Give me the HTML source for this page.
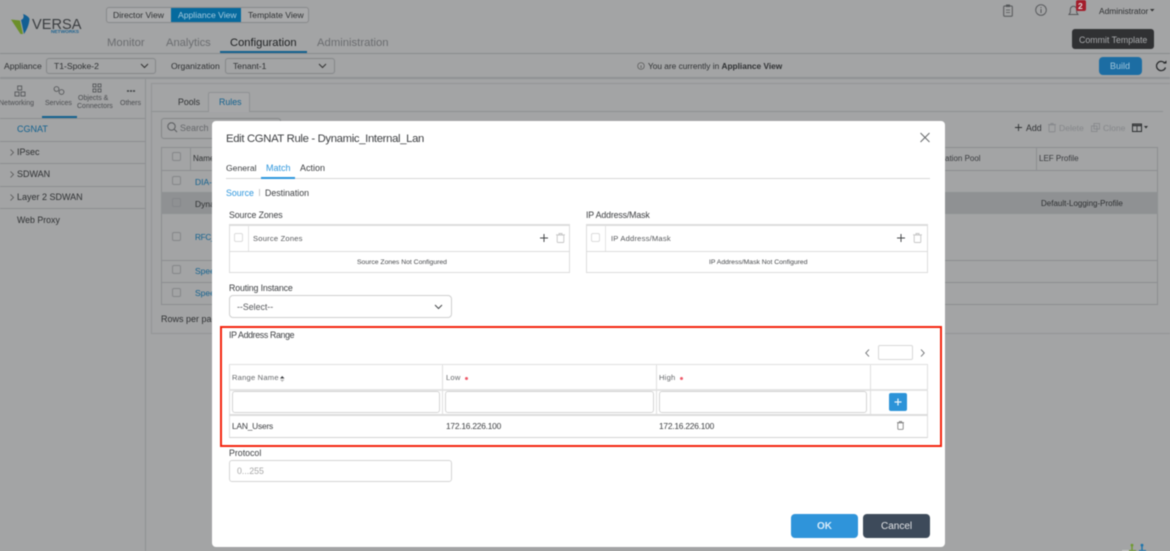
<!DOCTYPE html>
<html><head><meta charset="utf-8"><style>
html,body{margin:0;padding:0;width:1170px;height:551px;overflow:hidden;background:#a3a4a5}
#r{position:relative;width:1170px;height:551px;overflow:hidden;font-family:"Liberation Sans",sans-serif;filter:blur(.5px)}
#r div,#r span.t{position:absolute;box-sizing:border-box}
.t{white-space:nowrap;line-height:14px;height:14px;color:#2f3133}
svg{position:absolute;overflow:visible}
.bx{border:1px solid #85878a;border-radius:3px}
</style></head><body><div id="r">
<!-- background -->
<svg style="left:11px;top:14px" width="20" height="21" viewBox="0 0 20 21"><path d="M0 5.5 L9 6.5 L12 20 L9.5 20Z" fill="#6c8f2a"/><path d="M10 6 C13 5 13 2 12 0 C15 1 18 3 18.5 5 C18 12 15 17 13 20 Z" fill="#125f94"/></svg>
<span class="t" style="left:32px;top:16px;font-size:14.6px;line-height:18px;height:18px;color:#3a3d40">VERSA</span>
<span class="t" style="left:51px;top:29px;font-size:4.8px;color:#1d6391;font-weight:bold;line-height:8px;height:8px">NETWORKS</span>

<div style="left:106px;top:7px;width:203px;height:16px;background:#a8a9aa;border:1px solid #88898b;border-radius:3px"></div>
<div style="left:171px;top:8px;width:70px;height:14px;background:#066a9e"></div>
<span class="t" style="left:113px;top:8px;font-size:8.6px;color:#303234">Director View</span>
<span class="t" style="left:178px;top:8px;font-size:8.6px;color:#a4cbe0">Appliance View</span>
<span class="t" style="left:248px;top:8px;font-size:8.6px;color:#303234">Template View</span>

<span class="t" style="left:107px;top:36px;font-size:11.3px;color:#6b6d70">Monitor</span>
<span class="t" style="left:166px;top:36px;font-size:11.2px;color:#6b6d70">Analytics</span>
<span class="t" style="left:230px;top:36px;font-size:11.2px;color:#1e2022">Configuration</span>
<span class="t" style="left:317px;top:36px;font-size:11.3px;color:#6b6d70">Administration</span>
<div style="left:220px;top:51px;width:87px;height:2px;background:#14628f"></div>
<div style="left:0;top:53px;width:1170px;height:1px;background:#8a8c8e"></div>

<span class="t" style="left:4px;top:59px;font-size:8.6px">Appliance</span>
<div class="bx" style="left:46px;top:58px;width:110px;height:16px"></div>
<span class="t" style="left:54px;top:59px;font-size:8.6px">T1-Spoke-2</span>
<svg style="left:140px;top:63px" width="9" height="6"><path d="M1 1 L4.5 4.5 L8 1" fill="none" stroke="#333" stroke-width="1"/></svg>
<span class="t" style="left:171px;top:59px;font-size:8.6px">Organization</span>
<div class="bx" style="left:225px;top:58px;width:110px;height:16px"></div>
<span class="t" style="left:233px;top:59px;font-size:8.6px">Tenant-1</span>
<svg style="left:318px;top:63px" width="9" height="6"><path d="M1 1 L4.5 4.5 L8 1" fill="none" stroke="#333" stroke-width="1"/></svg>
<svg style="left:637px;top:62px" width="8" height="8"><circle cx="4" cy="4" r="3.3" fill="none" stroke="#555" stroke-width=".7"/><path d="M4 3.4V6" stroke="#555" stroke-width=".8"/></svg>
<span class="t" style="left:648px;top:59px;font-size:8.3px">You are currently in <b style="font-weight:bold">Appliance View</b></span>
<div style="left:1099px;top:57px;width:43px;height:18px;background:#1c6da3;border-radius:4px"></div>
<span class="t" style="left:1110px;top:59px;font-size:9px;color:#9fc4da">Build</span>
<svg style="left:1155px;top:60px" width="12" height="12"><path d="M10 3.5 A4.6 4.6 0 1 0 10.5 7.5" fill="none" stroke="#26282a" stroke-width="1.2"/><path d="M8 3.5H11.5V0.5Z" fill="#26282a"/></svg>
<div style="left:0;top:77px;width:1170px;height:2px;background:#909294"></div>

<svg style="left:1003px;top:4px" width="10" height="13"><rect x=".7" y="2" width="8.6" height="10.2" rx="1" fill="none" stroke="#55575a"/><rect x="3" y=".5" width="4" height="2.5" fill="#55575a"/><path d="M3 6H7M3 8.5H7" stroke="#55575a" stroke-width=".7"/></svg>
<svg style="left:1035px;top:4px" width="12" height="12"><circle cx="6" cy="6" r="5.3" fill="none" stroke="#55575a" stroke-width=".9"/><path d="M6 5V9M6 3V4" stroke="#55575a"/></svg>
<svg style="left:1068px;top:4px" width="11" height="13"><path d="M1 10.5 H10 L8.7 8.5 V5.5 A3.2 3.2 0 0 0 2.3 5.5 V8.5Z" fill="none" stroke="#55575a"/></svg>
<div style="left:1076px;top:0;width:10px;height:11px;background:#a31d2b;border-radius:2px"></div>
<span class="t" style="left:1078px;top:-1px;font-size:8.5px;font-weight:bold;color:#ddd">2</span>
<span class="t" style="left:1099px;top:4px;font-size:8.4px">Administrator</span>
<svg style="left:1150px;top:9px" width="5" height="3"><path d="M0 0H4.5L2.2 2.5Z" fill="#333"/></svg>
<div style="left:1072px;top:29px;width:82px;height:20px;background:#303133;border-radius:3px"></div>
<span class="t" style="left:1079px;top:33px;font-size:8.8px;color:#a9abad">Commit Template</span>

<!-- sidebar -->
<div style="left:145px;top:79px;width:1px;height:472px;background:#8f9193"></div>
<svg style="left:14px;top:85px" width="12" height="12" fill="none" stroke="#4d4f52" stroke-width=".8"><rect x="3.7" y="1" width="4" height="4"/><rect x="1" y="7" width="4" height="4"/><rect x="7" y="7" width="4" height="4"/></svg>
<svg style="left:53px;top:86px" width="12" height="10" fill="none" stroke="#4d4f52" stroke-width=".8"><circle cx="3.5" cy="3" r="2.4"/><circle cx="8.5" cy="6" r="2.4"/></svg>
<svg style="left:92px;top:83px" width="10" height="10" fill="none" stroke="#4d4f52" stroke-width=".8"><rect x="1" y="1" width="3" height="3"/><rect x="6" y="1" width="3" height="3"/><rect x="1" y="6" width="3" height="3"/><rect x="6" y="6" width="3" height="3"/></svg>
<svg style="left:127px;top:90px" width="8" height="3"><path d="M0 1H8" stroke="#3d3f42" stroke-width="1.4" stroke-dasharray="2 1"/></svg>
<span class="t" style="left:-1px;top:97px;font-size:7px;color:#4b4d50">Networking</span>
<span class="t" style="left:45px;top:97px;font-size:7px;color:#4b4d50">Services</span>
<span class="t" style="left:78px;top:95px;font-size:7px;color:#4b4d50;line-height:8px">Objects &amp;</span>
<span class="t" style="left:77px;top:103px;font-size:7px;color:#4b4d50;line-height:8px">Connectors</span>
<span class="t" style="left:120px;top:97px;font-size:7px;color:#4b4d50">Others</span>
<div style="left:42px;top:116px;width:35px;height:2px;background:#14628f"></div>
<div style="left:0;top:118px;width:145px;height:1px;background:#8d8f91"></div>
<span class="t" style="left:17px;top:122px;font-size:9px;color:#14628f">CGNAT</span>
<div style="left:0;top:141px;width:145px;height:1px;background:#8d8f91"></div>
<span class="t" style="left:17px;top:145px;font-size:9px">IPsec</span>
<div style="left:0;top:163px;width:145px;height:1px;background:#8d8f91"></div>
<span class="t" style="left:17px;top:167px;font-size:9px">SDWAN</span>
<div style="left:0;top:186px;width:145px;height:1px;background:#8d8f91"></div>
<span class="t" style="left:17px;top:190px;font-size:9px">Layer 2 SDWAN</span>
<div style="left:0;top:208px;width:145px;height:1px;background:#8d8f91"></div>
<span class="t" style="left:17px;top:213px;font-size:8.8px">Web Proxy</span>
<svg style="left:10px;top:149px" width="4" height="7"><path d="M.5 .5L3.5 3.5L.5 6.5" fill="none" stroke="#555" stroke-width=".8"/></svg>
<svg style="left:10px;top:171px" width="4" height="7"><path d="M.5 .5L3.5 3.5L.5 6.5" fill="none" stroke="#555" stroke-width=".8"/></svg>
<svg style="left:10px;top:194px" width="4" height="7"><path d="M.5 .5L3.5 3.5L.5 6.5" fill="none" stroke="#555" stroke-width=".8"/></svg>

<!-- panel -->
<div style="left:151px;top:83px;width:1019px;height:1px;background:#939597"></div>
<div style="left:151px;top:83px;width:1px;height:250px;background:#939597"></div>
<div style="left:151px;top:333px;width:1019px;height:1px;background:#939597"></div>
<div style="left:151px;top:111px;width:1012px;height:1px;background:#8f9193"></div>
<div style="left:208px;top:92px;width:42px;height:20px;background:#a6a7a8;border:1px solid #909294;border-bottom:none;border-radius:2px 2px 0 0"></div>
<span class="t" style="left:178px;top:95px;font-size:8.8px">Pools</span>
<span class="t" style="left:219px;top:95px;font-size:8.8px;color:#14628f">Rules</span>
<div class="bx" style="left:161px;top:118px;width:120px;height:21px"></div>
<svg style="left:167px;top:122px" width="11" height="11" fill="none" stroke="#5a5c5f"><circle cx="4.5" cy="4.5" r="3.7"/><path d="M7.3 7.3L10 10"/></svg>
<span class="t" style="left:180px;top:121px;font-size:9px;color:#66686b">Search</span>

<div style="left:161px;top:147px;width:1px;height:158px;background:#8d8f91"></div>
<div style="left:161px;top:147px;width:997px;height:1px;background:#8d8f91"></div>
<div style="left:1157px;top:147px;width:1px;height:158px;background:#8d8f91"></div>
<div style="left:161px;top:304px;width:997px;height:1px;background:#8d8f91"></div>
<div style="left:161px;top:170px;width:997px;height:1px;background:#8d8f91"></div>
<div style="left:161px;top:192px;width:997px;height:22px;background:#8f9193"></div>
<div style="left:161px;top:260px;width:997px;height:1px;background:#8d8f91"></div>
<div style="left:161px;top:282px;width:997px;height:1px;background:#8d8f91"></div>
<div style="left:190px;top:147px;width:1px;height:23px;background:#8d8f91"></div>
<div style="left:1036px;top:147px;width:1px;height:23px;background:#8d8f91"></div>
<div class="bx" style="left:172px;top:152px;width:9px;height:9px;border-radius:2px"></div>
<div class="bx" style="left:172px;top:176px;width:9px;height:9px;border-radius:2px"></div>
<div class="bx" style="left:172px;top:198px;width:9px;height:9px;border-radius:2px"></div>
<div class="bx" style="left:172px;top:232px;width:9px;height:9px;border-radius:2px"></div>
<div class="bx" style="left:172px;top:265px;width:9px;height:9px;border-radius:2px"></div>
<div class="bx" style="left:172px;top:288px;width:9px;height:9px;border-radius:2px"></div>
<span class="t" style="left:193px;top:152px;font-size:8px">Name</span>
<span class="t" style="left:195px;top:175px;font-size:8.5px;color:#14628f">DIA-</span>
<span class="t" style="left:195px;top:197px;font-size:8.5px">Dyna</span>
<span class="t" style="left:195px;top:231px;font-size:8.2px;letter-spacing:-.3px;color:#14628f">RFC_</span>
<span class="t" style="left:195px;top:264px;font-size:8.5px;color:#14628f">Spee</span>
<span class="t" style="left:195px;top:286px;font-size:8.5px;color:#14628f">Spee</span>
<span class="t" style="left:161px;top:312px;font-size:9px">Rows per page</span>
<span class="t" style="left:945px;top:152px;font-size:8px;color:#3a3c3f">ation Pool</span>
<span class="t" style="left:1039px;top:152px;font-size:8px;color:#3a3c3f">LEF Profile</span>
<span class="t" style="left:1041px;top:197px;font-size:8px">Default-Logging-Profile</span>
<svg style="left:1015px;top:124px" width="7" height="7"><path d="M3.5 0V7M0 3.5H7" stroke="#2f3133" stroke-width=".9"/></svg>
<span class="t" style="left:1026px;top:121px;font-size:8.8px;color:#303234">Add</span>
<svg style="left:1048px;top:123px" width="8" height="10" fill="none" stroke="#85878a" stroke-width=".8"><path d="M0 1.5H8M3 1.2V.4H5V1.2"/><rect x="1" y="1.8" width="6" height="7" rx=".7"/></svg>
<span class="t" style="left:1059px;top:121px;font-size:8.6px;color:#85878a">Delete</span>
<svg style="left:1091px;top:123px" width="9" height="9" fill="none" stroke="#85878a" stroke-width=".8"><rect x="3" y=".5" width="5.5" height="5.5"/><rect x=".5" y="3" width="5.5" height="5.5"/></svg>
<span class="t" style="left:1103px;top:121px;font-size:8.6px;color:#85878a">Clone</span>
<svg style="left:1132px;top:123px" width="17" height="9"><rect x=".5" y="1" width="9" height="7.5" fill="none" stroke="#2f3133"/><path d="M.5 2.5H9.5" stroke="#2f3133" stroke-width="1.4"/><path d="M5 2V8" stroke="#2f3133" stroke-width=".8"/><path d="M12 3H16L14 5.5Z" fill="#2f3133"/></svg>

<svg style="left:1122px;top:543px" width="10" height="8"><path d="M0 8H9" stroke="#c8c8c8" stroke-width="2"/></svg>
<svg style="left:1128px;top:543px" width="20" height="8"><path d="M4 2V8" stroke="#6f9a30" stroke-width="1.4"/><circle cx="4" cy="2.2" r="1.4" fill="#6f9a30"/><path d="M1 8H8" stroke="#6f9a30" stroke-width="2"/></svg>
<svg style="left:1139px;top:543px" width="8" height="8"><path d="M3 2V8" stroke="#1d74ad" stroke-width="1.4"/><circle cx="3" cy="2.2" r="1.4" fill="#1d74ad"/><path d="M0 8H7" stroke="#1d74ad" stroke-width="2"/></svg>

<!-- modal -->
<div style="left:212px;top:121px;width:733px;height:426px;background:#fff;border-radius:4px"></div>
<span class="t" style="left:226px;top:132px;font-size:11.3px;letter-spacing:-.33px;color:#3c3e41">Edit CGNAT Rule - Dynamic_Internal_Lan</span>
<svg style="left:920px;top:132px" width="10" height="11"><path d="M.5 1L9.5 10M9.5 1L.5 10" stroke="#66686b" stroke-width="1"/></svg>
<span class="t" style="left:226px;top:161px;font-size:8.6px;color:#3c3e41">General</span>
<span class="t" style="left:266px;top:161px;font-size:9px;color:#2d96dd">Match</span>
<span class="t" style="left:300px;top:161px;font-size:9px;color:#3c3e41">Action</span>
<div style="left:226px;top:178px;width:704px;height:1px;background:#d8d8d8"></div>
<div style="left:261px;top:177px;width:34px;height:2px;background:#2d96dd"></div>
<span class="t" style="left:226px;top:186px;font-size:8.8px;color:#2d96dd">Source</span>
<div style="left:259px;top:189px;width:1px;height:7px;background:#c9c9c9"></div>
<span class="t" style="left:265px;top:186px;font-size:8.8px;color:#3c3e41">Destination</span>

<span class="t" style="left:229px;top:208px;font-size:8.8px;letter-spacing:-.1px;color:#3c3e41">Source Zones</span>
<div style="left:229px;top:224px;width:341px;height:49px;border:1px solid #dcdcdc;border-top:2px solid #dcdcdc"></div>
<div style="left:229px;top:251px;width:341px;height:1px;background:#dcdcdc"></div>
<div style="left:248px;top:225px;width:1px;height:26px;background:#e3e3e3"></div>
<div style="left:234px;top:233px;width:9px;height:9px;border:1px solid #dcdcdc;border-radius:2px"></div>
<span class="t" style="left:253px;top:232px;font-size:7.6px;color:#55575a;letter-spacing:.2px">Source Zones</span>
<svg style="left:540px;top:234px" width="8" height="8"><path d="M4 0V8M0 4H8" stroke="#46484b" stroke-width="1"/></svg>
<svg style="left:556px;top:233px" width="9" height="10" fill="none" stroke="#c6c6c6" stroke-width=".9"><path d="M0 1.8H9M3 1.5V.5H6V1.5"/><rect x="1.2" y="2" width="6.6" height="7.5" rx=".8"/></svg>
<span class="t" style="left:357px;top:256px;font-size:6.8px;color:#46484b">Source Zones Not Configured</span>

<span class="t" style="left:586px;top:208px;font-size:8.8px;letter-spacing:-.15px;color:#3c3e41">IP Address/Mask</span>
<div style="left:586px;top:224px;width:342px;height:49px;border:1px solid #dcdcdc;border-top:2px solid #dcdcdc"></div>
<div style="left:586px;top:251px;width:342px;height:1px;background:#dcdcdc"></div>
<div style="left:605px;top:225px;width:1px;height:26px;background:#e3e3e3"></div>
<div style="left:591px;top:233px;width:9px;height:9px;border:1px solid #dcdcdc;border-radius:2px"></div>
<span class="t" style="left:611px;top:232px;font-size:7.6px;color:#55575a;letter-spacing:.2px">IP Address/Mask</span>
<svg style="left:897px;top:234px" width="8" height="8"><path d="M4 0V8M0 4H8" stroke="#46484b" stroke-width="1"/></svg>
<svg style="left:913px;top:233px" width="9" height="10" fill="none" stroke="#c6c6c6" stroke-width=".9"><path d="M0 1.8H9M3 1.5V.5H6V1.5"/><rect x="1.2" y="2" width="6.6" height="7.5" rx=".8"/></svg>
<span class="t" style="left:709px;top:256px;font-size:6.8px;color:#46484b">IP Address/Mask Not Configured</span>

<span class="t" style="left:229px;top:281px;font-size:8.8px;letter-spacing:-.15px;color:#3c3e41">Routing Instance</span>
<div style="left:229px;top:295px;width:223px;height:23px;border:1px solid #cfcfcf;border-radius:4px"></div>
<span class="t" style="left:237px;top:300px;font-size:8.8px;color:#55575a">--Select--</span>
<svg style="left:434px;top:304px" width="9" height="6"><path d="M1 1L4.5 4.5L8 1" fill="none" stroke="#46484b" stroke-width="1"/></svg>

<!-- red box -->
<div style="left:220px;top:326px;width:722px;height:121px;border:2px solid #f3250f"></div>
<span class="t" style="left:229px;top:328px;font-size:8.8px;letter-spacing:-.35px;color:#3c3e41">IP Address Range</span>
<svg style="left:865px;top:349px" width="5" height="8"><path d="M4 .5L.8 4L4 7.5" fill="none" stroke="#66686b" stroke-width=".9"/></svg>
<div style="left:878px;top:345px;width:35px;height:15px;border:1px solid #d8d8d8;border-radius:2px"></div>
<svg style="left:920px;top:349px" width="5" height="8"><path d="M1 .5L4.2 4L1 7.5" fill="none" stroke="#66686b" stroke-width=".9"/></svg>

<div style="left:229px;top:364px;width:699px;height:74px;border:1px solid #e1e1e1;border-bottom:1.5px solid #d5d5d5"></div>
<div style="left:229px;top:389px;width:699px;height:2px;background:#e4e4e4"></div>
<div style="left:229px;top:414px;width:699px;height:2px;background:#dcdcdc"></div>
<div style="left:442px;top:364px;width:1px;height:51px;background:#e1e1e1"></div>
<div style="left:656px;top:364px;width:1px;height:51px;background:#e1e1e1"></div>
<div style="left:870px;top:364px;width:1px;height:51px;background:#e1e1e1"></div>
<span class="t" style="left:232px;top:371px;font-size:7.6px;color:#66686b;letter-spacing:.2px">Range Name</span>
<svg style="left:280px;top:376px" width="5" height="6"><path d="M0 2.5H4.5L2.2 0Z" fill="#3c3e41"/><path d="M0 3.5H4.5L2.2 6Z" fill="#bbb"/></svg>
<span class="t" style="left:446px;top:371px;font-size:7.6px;color:#66686b;letter-spacing:.2px">Low</span>
<div style="left:465px;top:377px;width:3px;height:3px;background:#ee5a6a;border-radius:50%"></div>
<span class="t" style="left:659px;top:371px;font-size:7.6px;color:#66686b;letter-spacing:.2px">High</span>
<div style="left:680px;top:377px;width:3px;height:3px;background:#ee5a6a;border-radius:50%"></div>
<div style="left:232px;top:391px;width:208px;height:22px;border:1px solid #d5d5d5;border-radius:3px"></div>
<div style="left:445px;top:391px;width:209px;height:22px;border:1px solid #d5d5d5;border-radius:3px"></div>
<div style="left:659px;top:391px;width:208px;height:22px;border:1px solid #d5d5d5;border-radius:3px"></div>
<div style="left:889px;top:393px;width:18px;height:18px;background:#2c93d8;border-radius:2px"></div>
<svg style="left:894px;top:398px" width="8" height="8"><path d="M4 .5V7.5M.5 4H7.5" stroke="#e8f4fc" stroke-width="1.2"/></svg>
<span class="t" style="left:232px;top:419px;font-size:8.4px;letter-spacing:-.2px;color:#3c3e41">LAN_Users</span>
<span class="t" style="left:446px;top:419px;font-size:8.4px;letter-spacing:-.23px;color:#3c3e41">172.16.226.100</span>
<span class="t" style="left:659px;top:419px;font-size:8.4px;letter-spacing:-.23px;color:#3c3e41">172.16.226.100</span>
<svg style="left:897px;top:421px" width="7" height="9" fill="none" stroke="#777" stroke-width=".8"><path d="M0 1.6H7M2.4 1.4V.5H4.6V1.4"/><rect x=".8" y="1.8" width="5.4" height="6.6" rx=".8"/></svg>

<span class="t" style="left:229px;top:446px;font-size:8.8px;color:#3c3e41">Protocol</span>
<div style="left:229px;top:460px;width:223px;height:22px;border:1px solid #d5d5d5;border-radius:3px"></div>
<span class="t" style="left:237px;top:464px;font-size:8.8px;color:#a8a8a8">0...255</span>

<div style="left:791px;top:514px;width:67px;height:24px;background:#2f94da;border-radius:4px"></div>
<span class="t" style="left:817px;top:520px;font-size:10px;font-weight:bold;color:#d8ecf9">OK</span>
<div style="left:863px;top:514px;width:67px;height:24px;background:#3d4a5a;border-radius:4px"></div>
<span class="t" style="left:881px;top:520px;font-size:10px;color:#e2e4e7">Cancel</span>
</div></body></html>
